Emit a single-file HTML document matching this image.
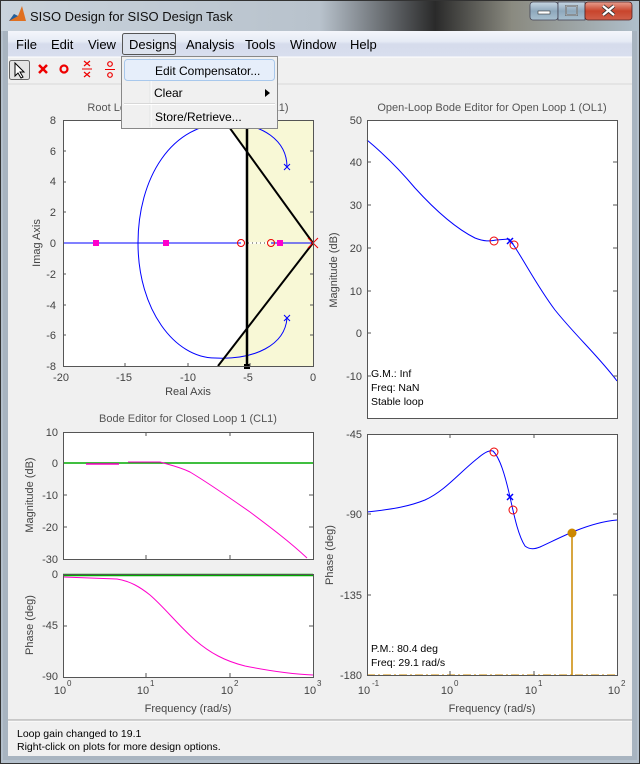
<!DOCTYPE html>
<html><head><style>
body{margin:0;width:640px;height:764px;overflow:hidden;background:#6b7380;font-family:"Liberation Sans",sans-serif;}
svg{position:absolute;left:0;top:0}
</style></head><body>
<svg width="640" height="764" viewBox="0 0 640 764" font-family="Liberation Sans, sans-serif">
<defs>
<linearGradient id="tb" x1="0" x2="1" y1="0" y2="0">
<stop offset="0" stop-color="#c9d3dc"/><stop offset="0.5" stop-color="#b8c2cc"/><stop offset="0.68" stop-color="#2a2a2a"/><stop offset="0.8" stop-color="#8a8a80"/><stop offset="1" stop-color="#b0c0cc"/></linearGradient>
<linearGradient id="mb" x1="0" x2="0" y1="0" y2="1"><stop offset="0" stop-color="#f4f6fb"/><stop offset="0.4" stop-color="#e6ebf5"/><stop offset="0.5" stop-color="#d6dcec"/><stop offset="1" stop-color="#d8deee"/></linearGradient>
<linearGradient id="cl" x1="0" x2="0" y1="0" y2="1"><stop offset="0" stop-color="#e8a090"/><stop offset="0.5" stop-color="#c8452c"/><stop offset="1" stop-color="#d0604a"/></linearGradient>
<linearGradient id="bt" x1="0" x2="0" y1="0" y2="1"><stop offset="0" stop-color="#c8d8e4"/><stop offset="0.5" stop-color="#8ea8bc"/><stop offset="1" stop-color="#a8c0d0"/></linearGradient>
</defs>
<rect x="0" y="0" width="640" height="764" fill="#b4c0cc"/>
<rect x="0" y="0" width="640" height="31" fill="url(#tb)"/>
<rect x="0" y="0" width="640" height="764" fill="none" stroke="#333" stroke-width="2"/>
<rect x="3" y="31" width="634" height="729" fill="#a8b4c0"/>
<path d="M9 21 L14 14 L18 16 L22 6 L26 21 Z" fill="#e07020"/><path d="M9 21 L14 14 L18 16 Z" fill="#2060a0"/>
<text x="30" y="21" font-size="13" fill="#111">SISO Design for SISO Design Task</text>
<rect x="530" y="2" width="28" height="18" rx="3" fill="url(#bt)" stroke="#445" stroke-width="0.8"/>
<rect x="538" y="11" width="12" height="3" fill="#fff" stroke="#333" stroke-width="0.6"/>
<rect x="558" y="2" width="27" height="18" fill="url(#bt)" stroke="#445" stroke-width="0.8"/>
<rect x="566" y="6" width="11" height="9" fill="none" stroke="#333" stroke-width="1.5"/><rect x="566" y="6" width="11" height="9" fill="none" stroke="#fff" stroke-width="0.6"/>
<rect x="585" y="2" width="47" height="18" rx="3" fill="url(#cl)" stroke="#522" stroke-width="0.8"/>
<path d="M603 6 L614 15 M614 6 L603 15" stroke="#333" stroke-width="4"/><path d="M603 6 L614 15 M614 6 L603 15" stroke="#fff" stroke-width="2.2"/>
<rect x="8" y="31" width="624" height="725" fill="#f0f0f0"/>
<rect x="8" y="31" width="624" height="26" fill="url(#mb)"/>
<line x1="8" y1="57" x2="632" y2="57" fill="none" stroke="#fff"/>
<rect x="122.5" y="33.5" width="53" height="21" rx="2" fill="#dde3ee" stroke="#555"/>
<g font-size="13" fill="#000">
<text x="16" y="49">File</text><text x="51" y="49">Edit</text><text x="88" y="49">View</text><text x="129" y="49">Designs</text><text x="186" y="49">Analysis</text><text x="245" y="49">Tools</text><text x="290" y="49">Window</text><text x="350" y="49">Help</text>
</g>
<rect x="9.5" y="60.5" width="20" height="19" rx="2" fill="#e4e4e4" stroke="#666"/>
<path d="M15 63 L15 76 L18 73 L21 78 L23 77 L20 72 L24 72 Z" fill="#fff" stroke="#000" stroke-width="1"/>
<path d="M39 65 L47 73 M47 65 L39 73" stroke="#e00" stroke-width="2.5"/>
<circle cx="64" cy="69" r="3.5" fill="none" stroke="#e00" stroke-width="2.2"/>
<path d="M84 61 L90 66 M90 61 L84 66 M84 72 L90 77 M90 72 L84 77" stroke="#e00" stroke-width="1.2"/><line x1="82" y1="69" x2="92" y2="69" stroke="#e00"/>
<circle cx="110" cy="64" r="2.3" fill="none" stroke="#e00" stroke-width="1.2"/><circle cx="110" cy="75" r="2.3" fill="none" stroke="#e00" stroke-width="1.2"/><line x1="105" y1="69.5" x2="115" y2="69.5" stroke="#e00"/>
<line x1="8" y1="84" x2="632" y2="84" stroke="#d8d8d8"/>

<g font-size="11" fill="#555">
<text x="188" y="111" text-anchor="middle">Root Locus Editor for Open Loop 1 (OL1)</text>
<text x="492" y="111" text-anchor="middle">Open-Loop Bode Editor for Open Loop 1 (OL1)</text>
<text x="188" y="422" text-anchor="middle">Bode Editor for Closed Loop 1 (CL1)</text>
</g>
<rect x="63" y="120" width="250" height="246" fill="#fff"/>
<polygon points="224,120 313,120 313,366 218,366 247,328 247,152" fill="#f8f8d6"/>
<line x1="63" y1="243" x2="313" y2="243" stroke="#00f"/>
<line x1="241" y1="243" x2="271" y2="243" stroke="#fff" stroke-width="1.5"/><line x1="244" y1="243" x2="268" y2="243" stroke="#444" stroke-dasharray="1,3"/>
<path d="M287,167 C287,140 262,124 230,123 C170,122 138,180 138,243 C138,310 175,358 215,358 C255,360 285,345 287,318" fill="none" stroke="#00f"/>
<path d="M284,164 L290,170 M290,164 L284,170 M284,315 L290,321 M290,315 L284,321" stroke="#00f"/>
<polyline points="224,120 313,243 218,366" fill="none" stroke="#000" stroke-width="2"/>
<line x1="247" y1="120" x2="247" y2="366" stroke="#000" stroke-width="2.5"/>
<rect x="244" y="364" width="6" height="5" fill="#000"/>
<rect x="93" y="240" width="6" height="6" fill="#f0c"/><rect x="163" y="240" width="6" height="6" fill="#f0c"/><rect x="277" y="240" width="6" height="6" fill="#f0c"/>
<circle cx="241" cy="243" r="3.5" fill="none" stroke="#e00"/><circle cx="271" cy="243" r="3.5" fill="none" stroke="#e00"/>
<path d="M308,238 L318,248 M318,238 L308,248" stroke="#e00"/>
<rect x="63.5" y="120.5" width="250" height="246" fill="none" stroke="#555"/>
<path d="M63 151h3M63 182h3M63 212h3M63 274h3M63 305h3M63 335h3M313 151h-3M313 182h-3M313 212h-3M313 274h-3M313 305h-3M313 335h-3M125 366v-3M188 366v-3M250 366v-3M125 120v3M188 120v3" stroke="#555"/>
<g font-size="11" fill="#444" text-anchor="end">
<text x="56" y="124">8</text><text x="56" y="155">6</text><text x="56" y="185">4</text><text x="56" y="216">2</text><text x="56" y="247">0</text><text x="56" y="278">-2</text><text x="56" y="309">-4</text><text x="56" y="339">-6</text><text x="56" y="370">-8</text>
</g>
<g font-size="11" fill="#444" text-anchor="middle">
<text x="61" y="381">-20</text><text x="124" y="381">-15</text><text x="188" y="381">-10</text><text x="248" y="381">-5</text><text x="313" y="381">0</text>
<text x="188" y="395">Real Axis</text>
</g>
<text transform="translate(40,243) rotate(-90)" font-size="11" fill="#444" text-anchor="middle">Imag Axis</text>

<rect x="367" y="120" width="250" height="298" fill="#fff"/>
<path d="M367,140 C385,155 400,170 415,188 C435,210 455,228 475,238 C485,242 490,241 496,240 L509,239 C512,242 514,246 518,252 C528,268 540,290 555,310 C575,335 600,358 617,381" fill="none" stroke="#00f"/>
<circle cx="494" cy="241" r="4" fill="none" stroke="#e00"/><circle cx="514" cy="245" r="4" fill="none" stroke="#e00"/>
<path d="M507,238 L513,244 M513,238 L507,244" stroke="#00f" stroke-width="1.5"/>
<rect x="367.5" y="120.5" width="250" height="298" fill="none" stroke="#555"/>
<path d="M367 162h4M367 205h4M367 248h4M367 291h4M367 333h4M367 376h4M617 162h-4M617 205h-4M617 248h-4M617 291h-4M617 333h-4M617 376h-4" stroke="#555"/>
<g font-size="11" fill="#444" text-anchor="end">
<text x="362" y="124">50</text><text x="362" y="166">40</text><text x="362" y="209">30</text><text x="362" y="252">20</text><text x="362" y="295">10</text><text x="362" y="337">0</text><text x="362" y="380">-10</text>
</g>
<text transform="translate(337,270) rotate(-90)" font-size="11" fill="#444" text-anchor="middle">Magnitude (dB)</text>
<g font-size="10.5" fill="#000"><text x="371" y="377">G.M.: Inf</text><text x="371" y="391">Freq: NaN</text><text x="371" y="405">Stable loop</text></g>

<rect x="367" y="434" width="250" height="241" fill="#fff"/>
<path d="M367,512 C395,509 410,506 425,500 C445,491 460,472 478,458 C485,452 490,450 493,451 C500,458 505,475 510,497 C514,515 518,535 525,546 C530,550 535,549 540,547 C555,540 565,535 575,531 C590,525 605,521 617,520" fill="none" stroke="#00f"/>
<circle cx="494" cy="452" r="4" fill="none" stroke="#e00"/><circle cx="513" cy="510" r="4" fill="none" stroke="#e00"/>
<path d="M507,494 L513,500 M513,494 L507,500" stroke="#00f" stroke-width="1.5"/>
<line x1="572" y1="533" x2="572" y2="675" stroke="#c80" stroke-width="1.5"/>
<circle cx="572" cy="533" r="4.5" fill="#c80"/>
<line x1="367" y1="675" x2="617" y2="675" stroke="#c80" stroke-dasharray="8,3,2,3"/>
<rect x="367.5" y="434.5" width="250" height="241" fill="none" stroke="#555"/>
<path d="M367 514h4M367 595h4M617 514h-4M617 595h-4M450 675v-4M534 675v-4M450 434v4M534 434v4" stroke="#555"/>
<g font-size="11" fill="#444" text-anchor="end">
<text x="362" y="438">-45</text><text x="362" y="518">-90</text><text x="362" y="599">-135</text><text x="362" y="679">-180</text>
</g>
<text transform="translate(333,555) rotate(-90)" font-size="11" fill="#444" text-anchor="middle">Phase (deg)</text>
<g font-size="10.5" fill="#000"><text x="371" y="652">P.M.: 80.4 deg</text><text x="371" y="666">Freq: 29.1 rad/s</text></g>
<g font-size="11" fill="#444">
<text x="364" y="694" text-anchor="middle">10</text><text x="372" y="686" font-size="8">-1</text>
<text x="447" y="694" text-anchor="middle">10</text><text x="454" y="686" font-size="8">0</text>
<text x="531" y="694" text-anchor="middle">10</text><text x="538" y="686" font-size="8">1</text>
<text x="614" y="694" text-anchor="middle">10</text><text x="621" y="686" font-size="8">2</text>
<text x="492" y="712" text-anchor="middle">Frequency (rad/s)</text>
</g>

<rect x="63" y="432" width="250" height="127" fill="#fff"/>
<line x1="63" y1="463" x2="313" y2="463" stroke="#0a0" stroke-width="1.5"/>
<line x1="86" y1="464" x2="119" y2="464" stroke="#f0c" stroke-width="1.5"/>
<path d="M128,462 L160,462 C170,465 180,467 190,472 C210,484 230,498 250,512 C270,527 290,542 307,558" fill="none" stroke="#f0c"/>
<rect x="63.5" y="432.5" width="250" height="127" fill="none" stroke="#555"/>
<path d="M63 495h4M63 527h4M313 495h-4M313 527h-4M146 559v-4M230 559v-4M146 432v4M230 432v4" stroke="#555"/>
<g font-size="11" fill="#444" text-anchor="end">
<text x="58" y="436">10</text><text x="58" y="467">0</text><text x="58" y="499">-10</text><text x="58" y="531">-20</text><text x="58" y="563">-30</text>
</g>
<text transform="translate(33,495) rotate(-90)" font-size="11" fill="#444" text-anchor="middle">Magnitude (dB)</text>

<rect x="63" y="574" width="250" height="103" fill="#fff"/>
<line x1="63" y1="575" x2="313" y2="575" stroke="#0a0" stroke-width="2.5"/>
<path d="M63,577 L117,579 C130,581 140,587 150,595 C165,608 178,625 195,640 C210,653 225,661 245,666 C270,671 290,674 313,675" fill="none" stroke="#f0c"/>
<rect x="63.5" y="574.5" width="250" height="103" fill="none" stroke="#555"/>
<path d="M63 626h4M313 626h-4M146 677v-4M230 677v-4" stroke="#555"/>
<g font-size="11" fill="#444" text-anchor="end">
<text x="58" y="578">0</text><text x="58" y="629">-45</text><text x="58" y="680">-90</text>
</g>
<text transform="translate(33,625) rotate(-90)" font-size="11" fill="#444" text-anchor="middle">Phase (deg)</text>
<g font-size="11" fill="#444">
<text x="60" y="694" text-anchor="middle">10</text><text x="67" y="686" font-size="8">0</text>
<text x="143" y="694" text-anchor="middle">10</text><text x="150" y="686" font-size="8">1</text>
<text x="227" y="694" text-anchor="middle">10</text><text x="234" y="686" font-size="8">2</text>
<text x="310" y="694" text-anchor="middle">10</text><text x="317" y="686" font-size="8">3</text>
<text x="188" y="712" text-anchor="middle">Frequency (rad/s)</text>
</g>

<line x1="8" y1="720" x2="632" y2="720" stroke="#a0a0a0"/>
<line x1="8" y1="721" x2="632" y2="721" stroke="#fff"/>
<g font-size="10.5" fill="#000"><text x="17" y="737">Loop gain changed to 19.1</text><text x="17" y="750">Right-click on plots for more design options.</text></g>

<rect x="121.5" y="56.5" width="156" height="72" fill="#f0f0f0" stroke="#888"/>
<line x1="150" y1="58" x2="150" y2="127" stroke="#e2e3e3"/><line x1="151" y1="58" x2="151" y2="127" stroke="#fff"/>
<rect x="124.5" y="59.5" width="150" height="21" rx="3" fill="#e6eefa" stroke="#a8c8ec"/>
<line x1="124" y1="103.5" x2="275" y2="103.5" stroke="#d8d8d8"/><line x1="124" y1="104.5" x2="275" y2="104.5" stroke="#fff"/>
<g font-size="12" fill="#000"><text x="155" y="75">Edit Compensator...</text><text x="154" y="97">Clear</text><text x="155" y="121">Store/Retrieve...</text></g>
<path d="M265 89 L270 93 L265 97 Z" fill="#000"/>
</svg>
</body></html>
